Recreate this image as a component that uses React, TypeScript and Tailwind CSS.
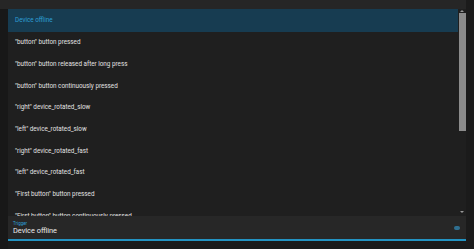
import React from "react";

const items = [
  '"button" button pressed',
  '"button" button released after long press',
  '"button" button continuously pressed',
  '"right" device_rotated_slow',
  '"left" device_rotated_slow',
  '"right" device_rotated_fast',
  '"left" device_rotated_fast',
  '"First button" button pressed',
  '"First button" button continuously pressed',
];

export default function App() {
  return (
    <div
      className="w-[474px] h-[249px] bg-[#1b1b1b] overflow-hidden flex flex-col"
      style={{ fontFamily: "Roboto, 'Liberation Sans', sans-serif" }}
    >
      <div className="h-[9px] bg-[#262626] shrink-0 mr-[8px]" />
      <div className="flex flex-1 min-h-0">
        <div className="w-[8px] shrink-0 bg-[#181818]" />
        <div className="w-[458px] flex flex-col">
          <div className="relative h-[207px] shrink-0 bg-[#1f1f1f] overflow-hidden flex">
            <div className="flex-1 flex flex-col">
              <div className="h-[23px] shrink-0 bg-[#173c51] flex items-center pl-[7px] text-[6.3px] text-[#2d9fd6]">
                Device offline
              </div>
              {items.map((t) => (
                <div
                  key={t}
                  className="h-[21.7px] shrink-0 flex items-center pl-[7px] text-[6.3px] text-[#e2e2e2]"
                >
                  {t}
                </div>
              ))}
            </div>
            <div className="w-[8px] shrink-0 flex flex-col items-center">
              <svg width="6" height="4" viewBox="0 0 6 4">
                <path d="M1 3 L3 1 L5 3 Z" fill="#9a9a9a" />
              </svg>
              <div className="w-[7px] h-[118px] bg-[#8c8c8c]" />
              <div className="flex-1" />
              <svg width="6" height="4" viewBox="0 0 6 4" className="mb-[2px]">
                <path d="M1 1 L3 3 L5 1 Z" fill="#9a9a9a" />
              </svg>
            </div>
          </div>
          <div className="relative h-[25px] shrink-0 bg-[#272727] border-b-[2px] border-[#2393c2] flex flex-col justify-center pl-[5px]">
            <div className="text-[4.5px] leading-[5px] text-[#2d9fd6]">Trigger</div>
            <div className="text-[7.4px] leading-[9px] text-[#ececec]">Device offline</div>
            <div className="absolute right-[6px] top-[10px] w-[6px] h-[4px] rounded-full bg-[#2f6f90]" />
          </div>
        </div>
      </div>
    </div>
  );
}
